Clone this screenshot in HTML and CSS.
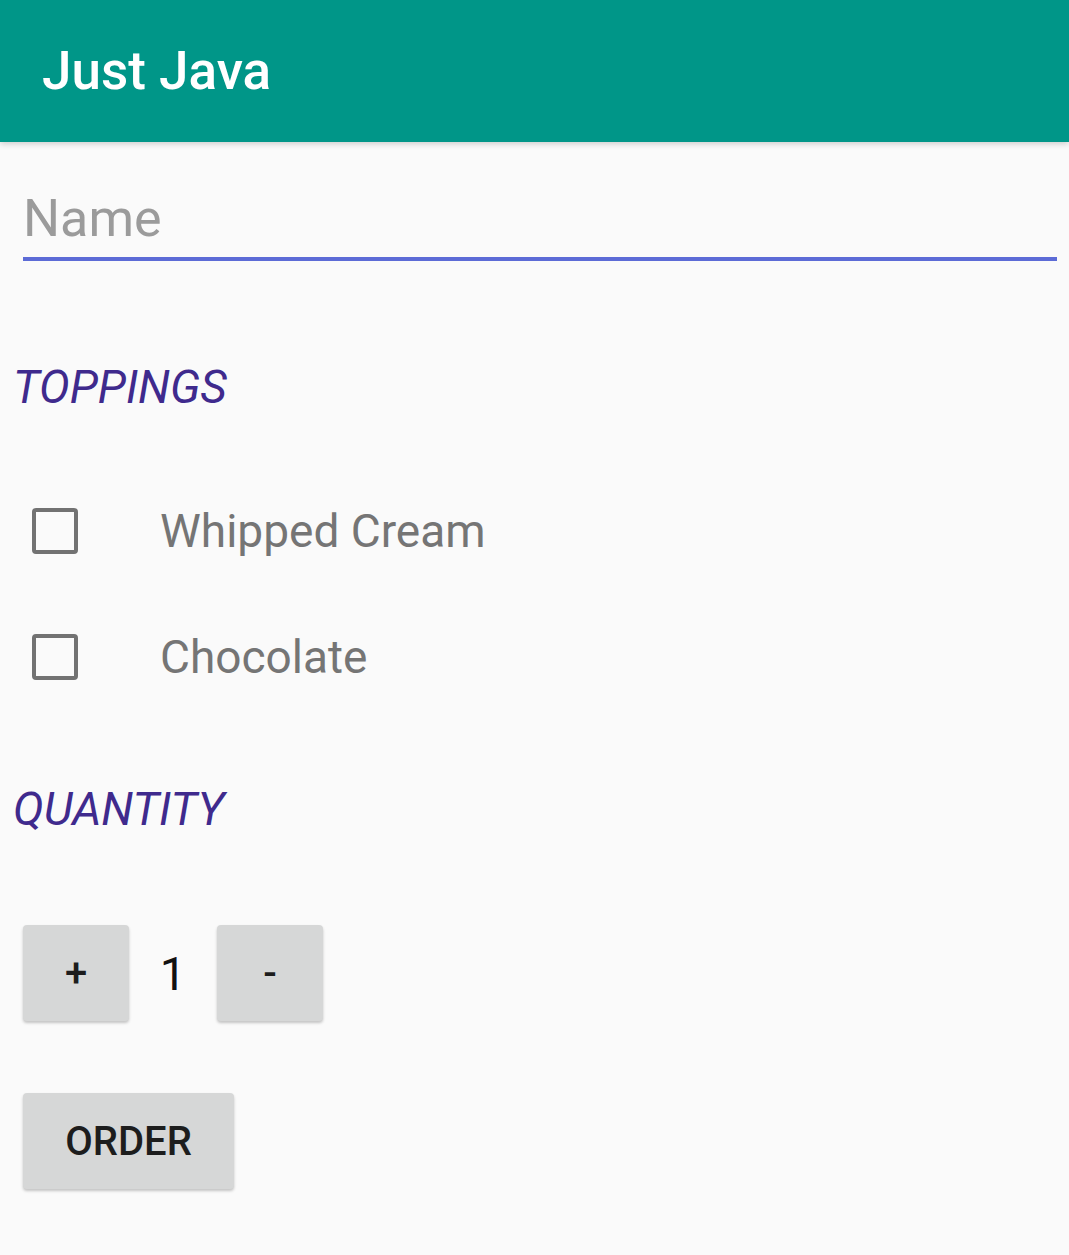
FILE: index.html
```html
<!DOCTYPE html>
<html>
<head>
<meta charset="utf-8">
<link rel="stylesheet" href="styles.css">
</head>
<body>
<header class="appbar"><h1 class="title">Just Java</h1></header>
<main class="content">
  <div class="name-field">Name</div>
  <h2 class="section">TOPPINGS</h2>
  <div class="check-row"><span class="box"></span><span class="label">Whipped Cream</span></div>
  <div class="check-row"><span class="box"></span><span class="label">Chocolate</span></div>
  <h2 class="section section-qty">QUANTITY</h2>
  <div class="qty-row">
    <button class="btn btn-sq">+</button>
    <span class="qty">1</span>
    <button class="btn btn-sq">-</button>
  </div>
  <button class="btn btn-order">ORDER</button>
</main>
</body>
</html>
```
FILE: styles.css
```css
* { box-sizing: border-box; }
html, body { margin: 0; padding: 0; }
body {
  background: #fafafa;
  font-family: Roboto, "Liberation Sans", sans-serif;
  width: 1069px;
  height: 1255px;
  overflow: hidden;
}
.appbar {
  height: 142px;
  background: #009688;
  display: flex;
  align-items: center;
  padding-left: 42px;
  box-shadow: 0 2px 6px rgba(0,0,0,0.18);
  position: relative;
  z-index: 1;
}
.title {
  margin: 0;
  color: #ffffff;
  font-weight: 500;
  font-size: 53px;
  line-height: 62px;
}
.content {
  display: flex;
  flex-direction: column;
  align-items: flex-start;
}
.name-field {
  align-self: stretch;
  margin: 46px 12px 0 23px;
  font-size: 52px;
  line-height: 62px;
  color: #9b9b9b;
  padding-bottom: 7px;
  border-bottom: 4px solid #5c6bd6;
}
.section {
  margin: 100px 0 0 13px;
  font-size: 46px;
  line-height: 52px;
  font-style: italic;
  font-weight: 400;
  color: #3f2a8d;
}
.check-row {
  height: 126px;
  display: flex;
  align-items: center;
  padding-left: 32px;
}
.section + .check-row { margin-top: 55px; }
.box {
  width: 46px;
  height: 46px;
  border: 4.5px solid #727272;
  border-radius: 4px;
  flex: none;
}
.label {
  margin-left: 82px;
  font-size: 46px;
  color: #757575;
}
.section-qty { margin-top: 63px; }
.qty-row {
  display: flex;
  align-items: center;
  margin: 90px 0 0 23px;
}
.btn {
  border: none;
  background: #d6d7d7;
  border-radius: 4px;
  box-shadow: 0 2px 3px rgba(0,0,0,0.22);
  font-family: Roboto, "Liberation Sans", sans-serif;
  color: #1d1d1d;
  font-weight: 500;
  padding: 0;
  cursor: pointer;
}
.btn-sq {
  width: 106px;
  height: 96px;
  font-size: 40px;
}
.qty {
  width: 88px;
  text-align: center;
  font-size: 47px;
  color: #111;
}
.btn-order {
  margin: 72px 0 0 23px;
  width: 211px;
  height: 96px;
  font-size: 40px;
}
```
